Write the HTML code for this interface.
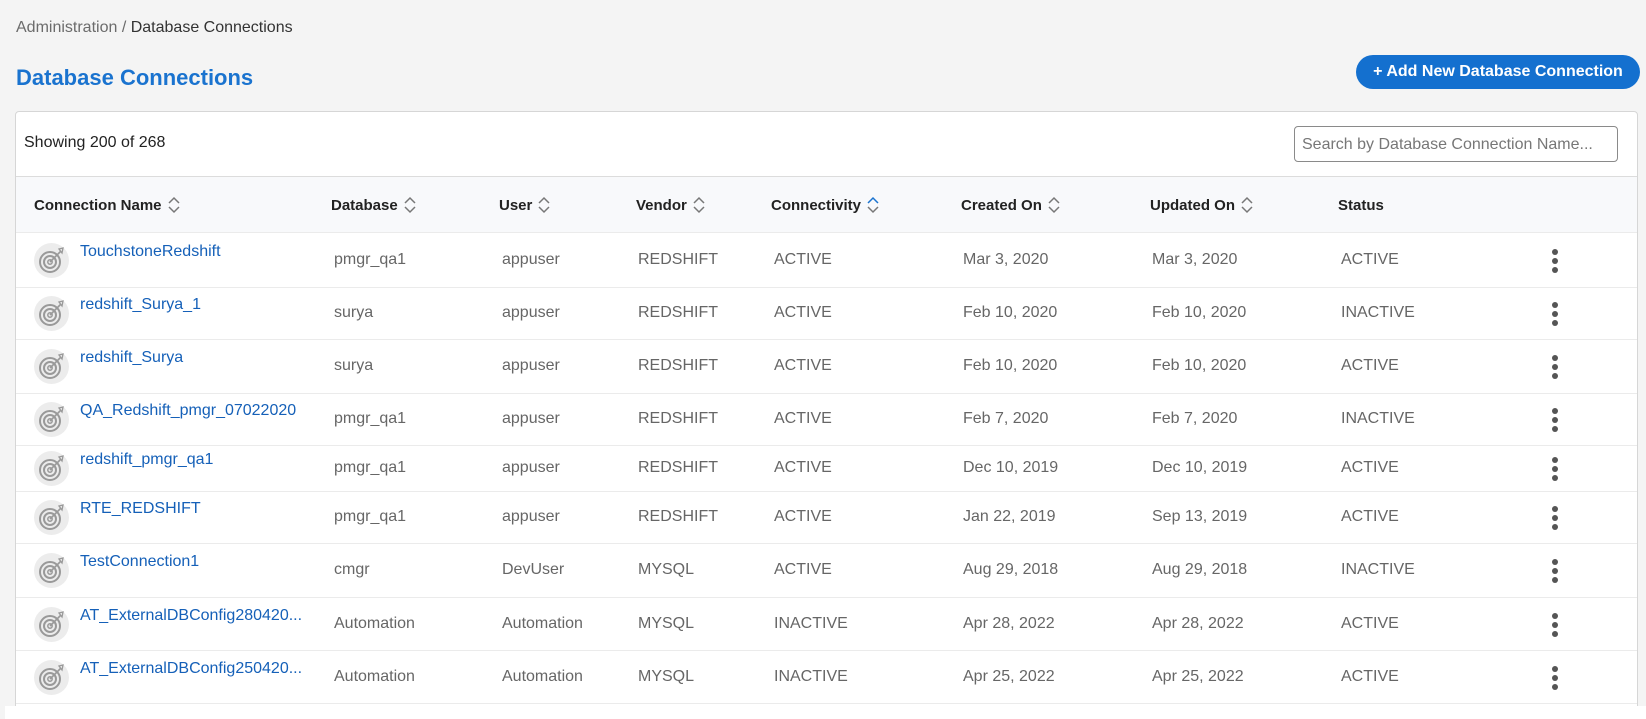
<!DOCTYPE html>
<html><head><style>
*{margin:0;padding:0;box-sizing:border-box}
body{width:1646px;height:719px;background:#f4f4f4;font-family:"Liberation Sans",sans-serif;position:relative;overflow:hidden}
.a{position:absolute;white-space:nowrap}
.bc{left:16px;top:19px;font-size:16px;color:#6b6b6b}
.bc span{color:#333}
.title{left:16px;top:65px;font-size:22px;font-weight:bold;color:#1a73cf}
.btn{left:1356px;top:55px;width:284px;height:34px;border-radius:17px;background:#1470cf;color:#fff;font-weight:bold;font-size:16px;text-align:center;line-height:34px}
.card{left:15px;top:111px;width:1623px;height:600px;background:#fff;border:1px solid #d6d6d6;border-radius:4px}
.show{left:24px;top:134px;font-size:16px;color:#222}
.search{left:1294px;top:126px;width:324px;height:36px;border:1px solid #8a8a8a;border-radius:4px;background:#fff;font-size:16px;color:#777;padding:9px 0 0 7px}
.hd{left:16px;top:176px;width:1621px;height:57px;background:#f8f9fb;border-top:1px solid #dcdcdc;border-bottom:1px solid #ebebeb}
.h{font-size:15px;font-weight:bold;color:#222;top:197px}
.s{display:inline-block;vertical-align:middle;margin-left:6px;margin-top:-3px}
.line{left:16px;width:1621px;height:1px;background:#ebebeb}
.c{font-size:16px;color:#666}
.n{font-size:16px;color:#1560b8}
.ic{width:35px;height:35px;border-radius:50%;background:#ececec;left:34px}
.dots{left:1552px;width:7px}
.dots i{display:block;width:6px;height:6px;border-radius:50%;background:#555;margin-bottom:3px}
.bot{left:5px;top:706px;width:1641px;height:13px;background:#fff}
</style></head><body>
<div class="a bc">Administration / <span>Database Connections</span></div>
<div class="a title">Database Connections</div>
<div class="a btn">+ Add New Database Connection</div>
<div class="a card"></div>
<div class="a show">Showing 200 of 268</div>
<div class="a search">Search by Database Connection Name...</div>
<div class="a hd"></div>
<div id="rows"></div>
<div class="a bot"></div>
<script>
var sv='<svg class="s" width="12" height="18" viewBox="0 0 12 18"><path d="M1 7 L6 2 L11 7" fill="none" stroke="COL1" stroke-width="1.5"/><path d="M1 11 L6 16 L11 11" fill="none" stroke="#777" stroke-width="1.5"/></svg>';
var H=[["Connection Name",34,1],["Database",331,1],["User",499,1],["Vendor",636,1],["Connectivity",771,2],["Created On",961,1],["Updated On",1150,1],["Status",1338,0]];
var o="";
H.forEach(function(h){o+='<div class="a h" style="left:'+h[1]+'px">'+h[0]+(h[2]?sv.replace("COL1",h[2]==2?"#1a73cf":"#777"):"")+'</div>';});
var R=[["TouchstoneRedshift","pmgr_qa1","appuser","REDSHIFT","ACTIVE","Mar 3, 2020","Mar 3, 2020","ACTIVE"],
["redshift_Surya_1","surya","appuser","REDSHIFT","ACTIVE","Feb 10, 2020","Feb 10, 2020","INACTIVE"],
["redshift_Surya","surya","appuser","REDSHIFT","ACTIVE","Feb 10, 2020","Feb 10, 2020","ACTIVE"],
["QA_Redshift_pmgr_07022020","pmgr_qa1","appuser","REDSHIFT","ACTIVE","Feb 7, 2020","Feb 7, 2020","INACTIVE"],
["redshift_pmgr_qa1","pmgr_qa1","appuser","REDSHIFT","ACTIVE","Dec 10, 2019","Dec 10, 2019","ACTIVE"],
["RTE_REDSHIFT","pmgr_qa1","appuser","REDSHIFT","ACTIVE","Jan 22, 2019","Sep 13, 2019","ACTIVE"],
["TestConnection1","cmgr","DevUser","MYSQL","ACTIVE","Aug 29, 2018","Aug 29, 2018","INACTIVE"],
["AT_ExternalDBConfig280420...","Automation","Automation","MYSQL","INACTIVE","Apr 28, 2022","Apr 28, 2022","ACTIVE"],
["AT_ExternalDBConfig250420...","Automation","Automation","MYSQL","INACTIVE","Apr 25, 2022","Apr 25, 2022","ACTIVE"]];
var T=[233,287,339,393,445,491,543,597,650,703];
var X=[334,502,638,774,963,1152,1341];
var icon='<svg width="35" height="35" viewBox="0 0 35 35"><circle cx="16" cy="19" r="10" fill="none" stroke="#999" stroke-width="2"/><circle cx="16" cy="19" r="6" fill="none" stroke="#999" stroke-width="2"/><circle cx="16" cy="19" r="2.2" fill="none" stroke="#999" stroke-width="1.5"/><path d="M16 19 L27 8" stroke="#999" stroke-width="1.6"/><path d="M25 6 L29 5 L28 10 Z" fill="none" stroke="#999" stroke-width="1.3"/></svg>';
R.forEach(function(r,i){var t=T[i],b=T[i+1],m=(t+b)/2;
o+='<div class="a line" style="top:'+b+'px"></div>';
o+='<div class="a ic" style="top:'+(m-17)+'px">'+icon+'</div>';
o+='<div class="a n" style="left:80px;top:'+(m-17)+'px">'+r[0]+'</div>';
for(var k=1;k<8;k++)o+='<div class="a c" style="left:'+X[k-1]+'px;top:'+(m-9)+'px">'+r[k]+'</div>';
o+='<div class="a dots" style="top:'+(m-11)+'px"><i></i><i></i><i></i></div>';});
document.getElementById("rows").innerHTML=o;
</script>
</body></html>
